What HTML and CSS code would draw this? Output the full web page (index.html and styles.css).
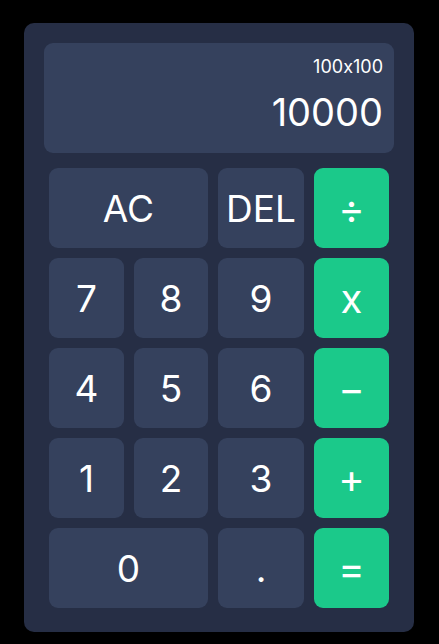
FILE: index.html
```html
<!DOCTYPE html>
<html lang="en">
<head>
<meta charset="utf-8">
<title>Calculator</title>
<link rel="stylesheet" href="styles.css">
</head>
<body>
<div class="calc">
  <div class="display">
    <div class="prev">100x100</div>
    <div class="curr">10000</div>
  </div>
  <div class="keys">
    <button class="key span2">AC</button>
    <button class="key">DEL</button>
    <button class="key op">÷</button>
    <button class="key">7</button>
    <button class="key">8</button>
    <button class="key">9</button>
    <button class="key op">x</button>
    <button class="key">4</button>
    <button class="key">5</button>
    <button class="key">6</button>
    <button class="key op">−</button>
    <button class="key">1</button>
    <button class="key">2</button>
    <button class="key">3</button>
    <button class="key op">+</button>
    <button class="key span2">0</button>
    <button class="key">.</button>
    <button class="key op">=</button>
  </div>
</div>
</body>
</html>
```
FILE: styles.css
```css
html, body {
  margin: 0;
  padding: 0;
  background: #000;
}
body {
  padding: 23px 25px 12px 24px;
  font-family: Inter, "Liberation Sans", sans-serif;
  font-feature-settings: "calt" 0;
  color: #fff;
}
.calc {
  width: 350px;
  background: #262e45;
  border-radius: 10px;
  padding: 20px 20px 24px;
}
.display {
  background: #35415d;
  border-radius: 9px;
  height: 110px;
  box-sizing: border-box;
  padding: 12px 11px 0 11px;
  text-align: right;
}
.prev {
  font-size: 18px;
  line-height: 24px;
  height: 24px;
}
.curr {
  font-size: 38px;
  line-height: 50px;
  margin-top: 8px;
}
.keys {
  display: grid;
  grid-template-columns: 75px 74px 86px 75px;
  grid-auto-rows: 80px;
  gap: 10px;
  margin: 15px 5px 0;
}
.key {
  border: none;
  border-radius: 9px;
  background: #35415d;
  color: #fff;
  font-family: inherit;
  font-feature-settings: "calt" 0;
  font-size: 37px;
  font-weight: 400;
  padding: 0;
  cursor: pointer;
}
.span2 {
  grid-column: span 2;
}
.op {
  background: #1bc98a;
  font-size: 40px;
}
```
